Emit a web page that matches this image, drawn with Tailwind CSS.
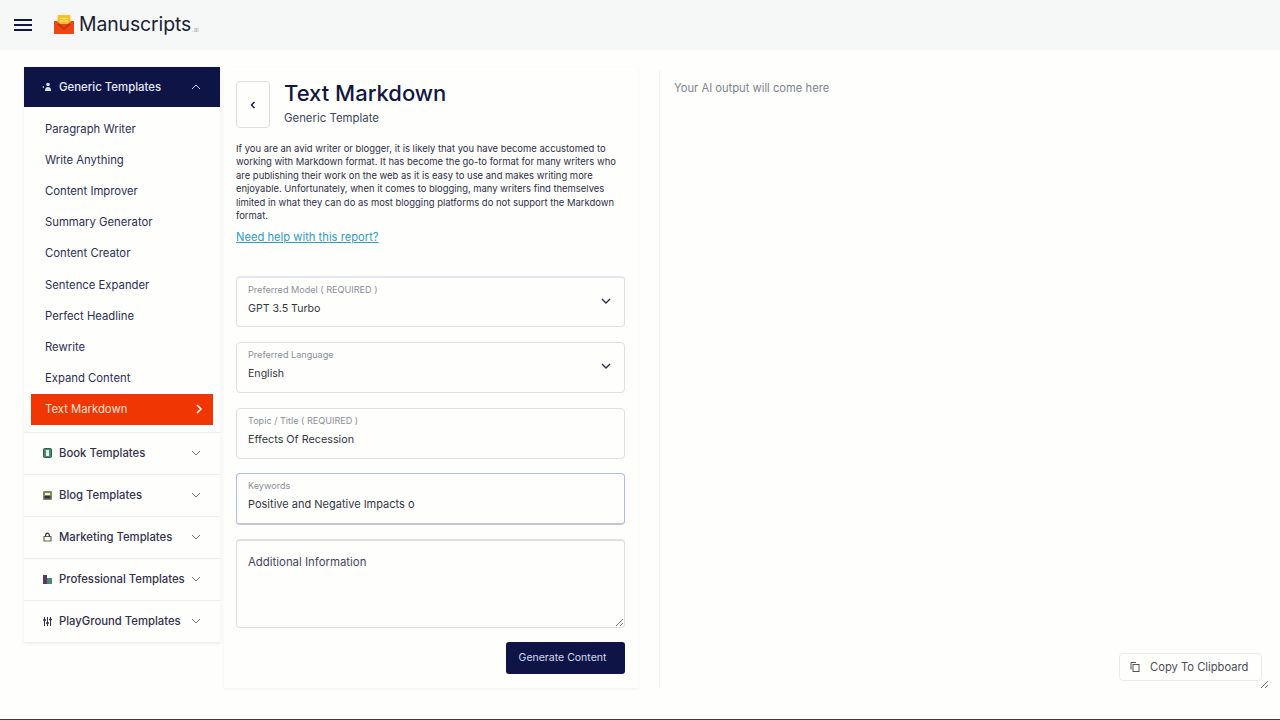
<!DOCTYPE html>
<html lang="en">
<head>
    <meta charset="UTF-8">
    <meta name="viewport" content="width=device-width, initial-scale=1.0">
    <title>Manuscripts - Text Markdown</title>
    <script src="https://cdn.jsdelivr.net/npm/@tailwindcss/browser@4"></script>
</head>
<body class="h-[720px] overflow-hidden bg-[#fefefc] font-['Inter',sans-serif] text-[#12173f] border-b border-[#3a3a3a]">

    <!-- Header -->
    <header class="h-[50px] bg-[#f6f8f7] flex items-center pl-[14px]">
        <button class="w-[18px] flex flex-col gap-[3px]">
            <span class="block h-[2px] w-[18px] bg-[#12173f]"></span>
            <span class="block h-[2px] w-[18px] bg-[#12173f]"></span>
            <span class="block h-[2px] w-[18px] bg-[#12173f]"></span>
        </button>
        <svg class="ml-[22px]" width="20" height="20" viewBox="0 0 20 20">
            <path d="M3.5 1q0-1 1-1h11q1 0 1 1v9h-13z" fill="#fbbf24"/>
            <path d="M6 3.5h8M6 6h8" stroke="#fde68a" stroke-width="1"/>
            <path d="M0 6h3.5v3h13V6H20v12q0 1-1 1H1q-1 0-1-1z" fill="#ef4415"/>
            <path d="M3.5 6.5L10 13l6.5-6.5v3L10 15 3.5 9.5z" fill="#c2340c"/>
        </svg>
        <span class="ml-[5px] text-[19.4px] leading-none tracking-[-0.1px] text-[#1b2133]">Manuscripts</span>
        <span class="ml-[1px] text-[6px] text-[#9aa0a6] mt-[8px]">.ai</span>
    </header>

    <div class="flex pt-[17px] pl-[24px]">
        <!-- Sidebar -->
        <aside class="w-[196px] shrink-0 self-start shadow-[0_1px_4px_rgba(0,0,0,0.07)] bg-[#fefefc]">
            <div class="h-[40px] bg-[#0f1446] flex items-center pl-[18px] pr-[19px] text-white">
                <svg width="10" height="10" viewBox="0 0 10 10" fill="#dbe2f5">
                    <circle cx="6" cy="2.5" r="1.8"/><path d="M3 9c0-3 1-4 3-4s3 1 3 4z"/><path d="M0 5l2-1v2z"/>
                </svg>
                <span class="ml-[7px] pt-[1px] text-[11.4px] font-medium text-[#e3e8f8]">Generic Templates</span>
                <svg class="ml-auto" width="10" height="10" viewBox="0 0 10 10" fill="none" stroke="#cfd5ea"><path d="M1 7l4-4 4 4"/></svg>
            </div>
            <ul class="pt-[7px] text-[11.3px] text-[#2a2f55]">
                <li class="h-[31.1px] flex items-center pl-[21px]">Paragraph Writer</li>
                <li class="h-[31.1px] flex items-center pl-[21px]">Write Anything</li>
                <li class="h-[31.1px] flex items-center pl-[21px]">Content Improver</li>
                <li class="h-[31.1px] flex items-center pl-[21px]">Summary Generator</li>
                <li class="h-[31.1px] flex items-center pl-[21px]">Content Creator</li>
                <li class="h-[31.1px] flex items-center pl-[21px]">Sentence Expander</li>
                <li class="h-[31.1px] flex items-center pl-[21px]">Perfect Headline</li>
                <li class="h-[31.1px] flex items-center pl-[21px]">Rewrite</li>
                <li class="h-[31.1px] flex items-center pl-[21px]">Expand Content</li>
                <li class="h-[31px] mx-[7px] flex items-center pl-[14px] pr-[10px] bg-[#f03603] text-[#fde2d6]">
                    Text Markdown
                    <svg class="ml-auto" width="8" height="10" viewBox="0 0 8 10" fill="none" stroke="#ffffff" stroke-width="1.6"><path d="M2 1l4 4-4 4"/></svg>
                </li>
            </ul>
            <div class="mt-[7px] border-t border-[#eeeeec]">
                <div class="h-[42px] flex items-center pl-[19px] pr-[19px] border-b border-[#eeeeec]">
                    <svg width="9" height="10" viewBox="0 0 9 10"><rect x="0.5" y="0.5" width="8" height="9" rx="1" fill="#4c8a6d" stroke="#2f5d4a"/><rect x="3" y="2" width="3" height="6" fill="#f1f1e8"/></svg>
                    <span class="ml-[7px] text-[11.3px] font-medium text-[#33324d]">Book Templates</span>
                    <svg class="ml-auto" width="10" height="10" viewBox="0 0 10 10" fill="none" stroke="#6b7280"><path d="M1 3l4 4 4-4"/></svg>
                </div>
                <div class="h-[42px] flex items-center pl-[19px] pr-[19px] border-b border-[#eeeeec]">
                    <svg width="9" height="9" viewBox="0 0 9 9"><rect width="9" height="9" rx="1" fill="#7d8a57"/><rect x="2" y="2" width="5" height="2" fill="#f1f1e8"/><rect x="1.5" y="5" width="6" height="2.5" fill="#33324d"/></svg>
                    <span class="ml-[7px] text-[11.3px] font-medium text-[#33324d]">Blog Templates</span>
                    <svg class="ml-auto" width="10" height="10" viewBox="0 0 10 10" fill="none" stroke="#6b7280"><path d="M1 3l4 4 4-4"/></svg>
                </div>
                <div class="h-[42px] flex items-center pl-[19px] pr-[19px] border-b border-[#eeeeec]">
                    <svg width="9" height="10" viewBox="0 0 9 10" fill="none" stroke="#5f6e45" stroke-width="1.2"><path d="M1 4.5h7V9H1z"/><path d="M2.5 4.5C2.5 0 6.5 0 6.5 4.5" stroke="#33324d"/></svg>
                    <span class="ml-[7px] text-[11.3px] font-medium text-[#33324d]">Marketing Templates</span>
                    <svg class="ml-auto" width="10" height="10" viewBox="0 0 10 10" fill="none" stroke="#6b7280"><path d="M1 3l4 4 4-4"/></svg>
                </div>
                <div class="h-[42px] flex items-center pl-[19px] pr-[19px] border-b border-[#eeeeec]">
                    <svg width="9" height="9" viewBox="0 0 9 9"><rect width="4" height="9" fill="#5a3a5c"/><rect x="4" y="3" width="5" height="6" fill="#4c8a6d"/></svg>
                    <span class="ml-[7px] text-[11.3px] font-medium text-[#33324d] whitespace-nowrap">Professional Templates</span>
                    <svg class="ml-auto" width="10" height="10" viewBox="0 0 10 10" fill="none" stroke="#6b7280"><path d="M1 3l4 4 4-4"/></svg>
                </div>
                <div class="h-[42px] flex items-center pl-[19px] pr-[19px] border-b border-[#eeeeec]">
                    <svg width="9" height="9" viewBox="0 0 9 9" stroke="#33324d"><path d="M1.5 0v9M4.5 0v9M7.5 0v9"/><path d="M0 3h3M3 6h3M6 2.5h3" stroke-width="1.4"/></svg>
                    <span class="ml-[7px] text-[11.3px] font-medium text-[#33324d]">PlayGround Templates</span>
                    <svg class="ml-auto" width="10" height="10" viewBox="0 0 10 10" fill="none" stroke="#6b7280"><path d="M1 3l4 4 4-4"/></svg>
                </div>
            </div>
        </aside>

        <!-- Form card -->
        <main class="w-[414px] h-[621px] ml-[4px] shrink-0 pl-[12px] pr-[13px] pt-[14px] shadow-[0_1px_3px_rgba(0,0,0,0.05)]">
            <div class="flex">
                <button class="w-[34px] h-[47px] border border-[#e0e0dc] rounded-[4px] flex items-center justify-center">
                    <svg width="6" height="8" viewBox="0 0 6 8" fill="none" stroke="#12173f" stroke-width="1.4"><path d="M4.5 1L1.5 4l3 3"/></svg>
                </button>
                <div class="ml-[14px]">
                    <h1 class="text-[22px] leading-[24px] font-medium text-[#12173f]">Text Markdown</h1>
                    <p class="text-[11.4px] leading-[16px] text-[#41465c] mt-[5px]">Generic Template</p>
                </div>
            </div>
            <p class="mt-[14px] text-[9.45px] leading-[13.4px] text-[#2b2f45] w-[388px]">If you are an avid writer or blogger, it is likely that you have become accustomed to working with Markdown format. It has become the go-to format for many writers who are publishing their work on the web as it is easy to use and makes writing more enjoyable. Unfortunately, when it comes to blogging, many writers find themselves limited in what they can do as most blogging platforms do not support the Markdown format.</p>
            <a class="block mt-[7px] text-[11.2px] leading-[16px] text-[#2f9cc4] underline">Need help with this report?</a>

            <div class="mt-[31px] flex flex-col gap-[15px]">
                <div class="h-[51px] border border-[#e0e0dd] border-t-[#e4e6f0] border-t-2 rounded-[4px] pl-[11px] pr-[13px] pb-[6px] flex items-center justify-between">
                    <div>
                        <div class="text-[9.1px] leading-[13px] text-[#8a8f98]">Preferred Model ( REQUIRED )</div>
                        <div class="mt-[5px] text-[10.6px] leading-[15px] text-[#33363f]">GPT 3.5 Turbo</div>
                    </div>
                    <svg class="mt-[3px]" width="10" height="8" viewBox="0 0 10 8" fill="none" stroke="#2b2f45" stroke-width="1.4"><path d="M1 2l4 4 4-4"/></svg>
                </div>
                <div class="h-[51px] border border-[#e0e0dd] rounded-[4px] pl-[11px] pr-[13px] pb-[6px] flex items-center justify-between">
                    <div>
                        <div class="text-[9.1px] leading-[13px] text-[#8a8f98]">Preferred Language</div>
                        <div class="mt-[5px] text-[10.6px] leading-[15px] text-[#33363f]">English</div>
                    </div>
                    <svg class="mt-[3px]" width="10" height="8" viewBox="0 0 10 8" fill="none" stroke="#2b2f45" stroke-width="1.4"><path d="M1 2l4 4 4-4"/></svg>
                </div>
                <div class="h-[51px] border border-[#e0e0dd] rounded-[4px] px-[11px] pb-[6px] flex flex-col justify-center">
                    <div class="text-[9.1px] leading-[13px] text-[#8a8f98]">Topic / Title ( REQUIRED )</div>
                    <div class="mt-[5px] text-[10.8px] leading-[15px] text-[#33363f]">Effects Of Recession</div>
                </div>
                <div class="h-[52px] border border-[#a9bfe6] border-b-[#c4c8cc] border-b-2 rounded-[4px] px-[11px] pb-[6px] flex flex-col justify-center -mt-[1px]">
                    <div class="text-[9.1px] leading-[13px] text-[#8a8f98]">Keywords</div>
                    <div class="mt-[5px] text-[11px] leading-[15px] text-[#33363f]">Positive and Negative Impacts o</div>
                </div>
                <div class="relative h-[89px] -mt-[1px] border border-[#e0e0dd] border-t-2 rounded-[4px] px-[11px] pt-[13px]">
                    <div class="text-[11.4px] leading-[16px] text-[#41465c]">Additional Information</div>
                    <svg class="absolute right-[1px] bottom-[1px]" width="7" height="7" viewBox="0 0 7 7" stroke="#777" fill="none"><path d="M0 7L7 0M4 7L7 4"/></svg>
                </div>
            </div>
            <div class="flex justify-end mt-[14px]">
                <button class="w-[119px] h-[32px] bg-[#0f1446] rounded-[3px] text-[10.5px] text-[#d5daf0] pr-[6px] pb-[2px]">Generate Content</button>
            </div>
        </main>

        <!-- Output panel -->
        <section class="relative w-[609px] h-[618px] ml-[21px] mt-[3px] border-l border-[#f3f3f0] pl-[14px] pt-[10px]">
            <p class="text-[11.2px] leading-[16px] text-[#7d838c]">Your AI output will come here</p>
            <button class="absolute left-[459px] top-[583px] w-[143px] h-[28px] border border-[#ebebe8] rounded-[4px] flex items-center pl-[10px] text-[11.2px] text-[#4a4d57]">
                <svg width="10" height="10" viewBox="0 0 10 10" fill="none" stroke="#555"><rect x="3" y="2.5" width="6" height="7"/><path d="M1 7.5V.5h5"/></svg>
                <span class="ml-[10px]">Copy To Clipboard</span>
            </button>
            <svg class="absolute right-0 bottom-0" width="7" height="7" viewBox="0 0 7 7" stroke="#777" fill="none"><path d="M0 7L7 0M4 7L7 4"/></svg>
        </section>
    </div>

</body>
</html>
